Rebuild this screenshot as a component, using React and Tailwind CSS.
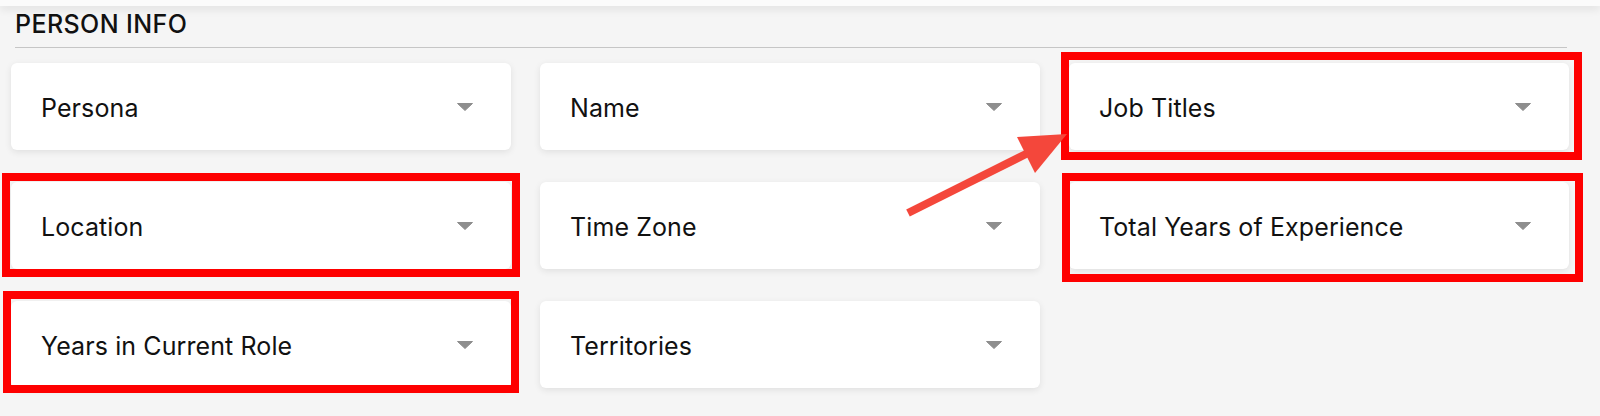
import React from "react";

function Caret() {
  return (
    <svg width="16" height="8" viewBox="0 0 16 8" className="shrink-0">
      <polygon points="0.5,0.5 15.5,0.5 8,7.5" fill="#8e8e8e" stroke="#8e8e8e" strokeWidth="1" strokeLinejoin="round" />
    </svg>
  );
}

function Field({ label, box }) {
  return (
    <div className="relative">
      <div className="h-[87px] bg-white rounded-[6px] shadow-[0_2px_7px_rgba(0,0,0,0.09)] flex items-center justify-between pl-[30px] pr-[38px]">
        <span className="text-[25px] leading-[30px] pt-[2px] tracking-[0.1px] text-[#111]">{label}</span>
        <Caret />
      </div>
      {box === "job" && (
        <div className="absolute left-[-8px] top-[-11px] right-[-13px] bottom-[-10px] border-[8px] border-[#fe0000] pointer-events-none" />
      )}
      {box === "total" && (
        <div className="absolute left-[-7px] top-[-9px] right-[-14px] bottom-[-13px] border-[8px] border-[#fe0000] pointer-events-none" />
      )}
      {box === "loc" && (
        <div className="absolute left-[-9px] top-[-9px] right-[-9px] bottom-[-8px] border-[8px] border-[#fe0000] pointer-events-none" />
      )}
      {box === "years" && (
        <div className="absolute left-[-8px] top-[-10px] right-[-8px] bottom-[-5px] border-[8px] border-[#fe0000] pointer-events-none" />
      )}
    </div>
  );
}

export default function App() {
  return (
    <div
      className="relative w-[1600px] h-[416px] overflow-hidden bg-[#f5f5f5]"
      style={{ fontFamily: "Inter, 'Noto Sans', sans-serif" }}
    >
      <div className="h-[6px] bg-[#fbfbfb] shadow-[0_3px_8px_rgba(0,0,0,0.10)]" />
      <div className="pl-[15px] pt-[3px]">
        <div className="text-[25px] leading-[30px] font-medium tracking-[0.4px] text-[#111]">PERSON INFO</div>
      </div>
      <div className="ml-[15px] mt-[8px] w-[1552px] h-px bg-[#c6c6c6]" />
      <div className="pl-[11px] pt-[15px] grid grid-cols-[500px_500px_500px] gap-x-[29px] gap-y-[32px]">
        <Field label="Persona" />
        <Field label="Name" />
        <Field label="Job Titles" box="job" />
        <Field label="Location" box="loc" />
        <Field label="Time Zone" />
        <Field label="Total Years of Experience" box="total" />
        <Field label="Years in Current Role" box="years" />
        <Field label="Territories" />
      </div>
      <svg className="absolute left-0 top-0 pointer-events-none" width="1600" height="416" viewBox="0 0 1600 416">
        <line x1="908" y1="213" x2="1030" y2="152" stroke="#f4473b" strokeWidth="8" />
        <polygon points="1067,134 1017,137 1035,173" fill="#f4473b" />
      </svg>
    </div>
  );
}
